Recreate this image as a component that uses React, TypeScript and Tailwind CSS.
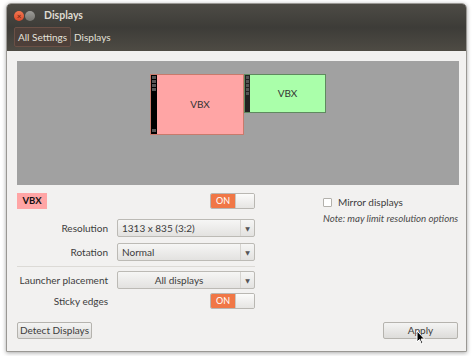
import React from "react";

const font = { fontFamily: 'Lato, "Open Sans", "DejaVu Sans", sans-serif' };

function Switch() {
  return (
    <div className="flex h-[16px] w-[45px] overflow-hidden rounded-[2px] border border-[#b9b7b2]">
      <div className="flex w-[24px] items-center justify-center bg-[#f07746] text-[9px] text-white">ON</div>
      <div className="flex-1 bg-gradient-to-b from-[#fbfbfa] to-[#e6e5e3] border-l border-[#c9c7c2]" />
    </div>
  );
}

function Dropdown({ text, center }: { text: string; center?: boolean }) {
  return (
    <div className="flex h-[18px] w-[138px] items-center rounded-[2px] border border-[#bcbab5] bg-gradient-to-b from-[#f6f6f5] to-[#e3e2e0] text-[10px] text-[#3c3c3c]">
      <div className={`flex-1 whitespace-nowrap px-[4px] ${center ? "text-center" : ""}`}>{text}</div>
      <div className="flex h-full w-[14px] items-center justify-center border-l border-[#d6d4d0] text-[6px] text-[#555]">▼</div>
    </div>
  );
}

export default function App() {
  return (
    <div className="relative h-[356px] w-[474px] bg-white pl-[6px] pt-[3px]" style={font}>
      <div className="flex h-[349px] w-[461px] flex-col overflow-hidden rounded-t-[5px] border border-[#9a9894] shadow-[0_1px_4px_rgba(0,0,0,0.35)]">
        {/* title + toolbar */}
        <div className="flex h-[47px] flex-col bg-gradient-to-b from-[#4d4b45] via-[#3d3c38] to-[#4e4b44]">
          <div className="flex h-[23px] items-center pl-[7px]">
            <div className="flex h-[10px] w-[10px] items-center justify-center rounded-full bg-gradient-to-b from-[#f3764f] to-[#d9482a] text-[8px] leading-none text-[#5a2010]">×</div>
            <div className="ml-[1px] h-[10px] w-[10px] rounded-full bg-gradient-to-b from-[#9d9c98] to-[#75746f]" />
            <div className="ml-[9px] text-[10.5px] font-bold text-[#dfdbd2]">Displays</div>
          </div>
          <div className="flex h-[20px] items-center pl-[7px] text-[10px] text-[#e4e1da]">
            <div className="flex h-[20px] items-center rounded-[2px] border border-[#6a5046] bg-[#4d3f39] px-[3px]">All Settings</div>
            <div className="flex h-[20px] items-center px-[3px]">Displays</div>
          </div>
        </div>
        {/* body */}
        <div className="flex flex-1 flex-col bg-[#f2f1f0] pl-[10px] pr-[7px] pt-[10px]">
          <div className="flex h-[124px] w-[442px] justify-center bg-[#a1a1a1] pt-[13px]">
            <div className="flex items-start">
              <div className="flex h-[61px] w-[94px] border border-[#c87a6c] bg-[#ffa5a5]">
                <div className="flex w-[6px] flex-col gap-[1px] bg-black px-[1px] pt-[1px]">
                  <div className="h-[3px] bg-[#555]" />
                  <div className="h-[3px] bg-[#555]" />
                  <div className="h-[3px] bg-[#555]" />
                  <div className="h-[3px] bg-[#555]" />
                  <div className="flex-1" />
                  <div className="mb-[2px] h-[3px] bg-[#555]" />
                </div>
                <div className="flex flex-1 items-center justify-center text-[10px] text-[#333]">VBX</div>
              </div>
              <div className="flex h-[39px] w-[82px] border border-[#5f8a5f] bg-[#aaffaa]">
                <div className="flex w-[5px] flex-col gap-[1px] bg-[#222] px-[1px] pt-[1px]">
                  <div className="h-[3px] bg-[#555]" />
                  <div className="h-[3px] bg-[#555]" />
                  <div className="h-[3px] bg-[#555]" />
                  <div className="h-[3px] bg-[#555]" />
                  <div className="h-[3px] bg-[#555]" />
                </div>
                <div className="flex flex-1 items-center justify-center text-[10px] text-[#333]">VBX</div>
              </div>
            </div>
          </div>

          <div className="flex pt-[8px]">
            <div className="flex w-[238px] flex-col text-[10px] text-[#3c3c3c]">
              <div className="flex h-[16px] items-center justify-between">
                <div className="flex h-[16px] w-[30px] items-center justify-center bg-[#ffa5a5] text-[9.5px] font-bold text-[#111]">VBX</div>
                <Switch />
              </div>
              <div className="mt-[10px] flex items-center">
                <div className="w-[91px] whitespace-nowrap text-right">Resolution</div>
                <div className="ml-[9px]"><Dropdown text="1313 x 835 (3:2)" /></div>
              </div>
              <div className="mt-[6px] flex items-center">
                <div className="w-[91px] whitespace-nowrap text-right">Rotation</div>
                <div className="ml-[9px]"><Dropdown text="Normal" /></div>
              </div>
              <div className="mt-[5px] h-px bg-[#dcdad6]" />
              <div className="mt-[4px] flex items-center">
                <div className="w-[91px] whitespace-nowrap text-right">Launcher placement</div>
                <div className="ml-[9px]"><Dropdown text="All displays" center /></div>
              </div>
              <div className="mt-[4px] flex h-[16px] items-center">
                <div className="w-[91px] whitespace-nowrap text-right">Sticky edges</div>
                <div className="ml-auto"><Switch /></div>
              </div>
            </div>
            <div className="ml-[68px] flex flex-col pt-[2px] text-[#3c3c3c]">
              <div className="flex items-center gap-[6px] text-[10px]">
                <div className="h-[9px] w-[9px] rounded-[1px] border border-[#b3b1ac] bg-white" />
                <span>Mirror displays</span>
              </div>
              <div className="mt-[1px] whitespace-nowrap text-[9.7px] italic text-[#4a4a4a]">Note: may limit resolution options</div>
            </div>
          </div>

          <div className="mt-[13px] flex justify-between">
            <div className="flex h-[17px] w-[75px] items-center justify-center rounded-[2px] border border-[#b5b3ae] bg-gradient-to-b from-[#f4f4f3] to-[#dddcda] text-[10px] text-[#3c3c3c]">Detect Displays</div>
            <div className="mr-[1px] flex h-[17px] w-[75px] items-center justify-center rounded-[2px] border border-[#b5b3ae] bg-gradient-to-b from-[#f4f4f3] to-[#dddcda] text-[10px] text-[#3c3c3c]">Apply</div>
          </div>
        </div>
      </div>
      <svg className="absolute left-[416px] top-[330px]" width="10" height="15" viewBox="0 0 10 15">
        <path d="M1 1 L1 12 L3.5 9.5 L5.5 14 L7 13.3 L5 9 L8.5 9 Z" fill="black" stroke="white" strokeWidth="1" />
      </svg>
    </div>
  );
}
